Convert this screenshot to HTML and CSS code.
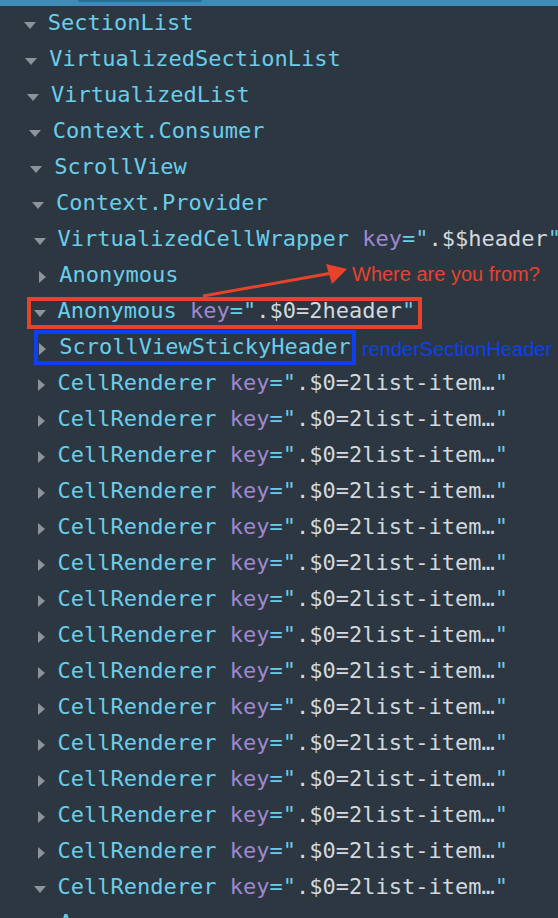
FILE: index.html
```html
<!DOCTYPE html>
<html>
<head>
<meta charset="utf-8">
<link rel="stylesheet" href="styles.css">
</head>
<body>
<div class="panel">
  <div class="topbar"><div class="thumb"></div></div>
  <div class="tree">
    <div class="row d0"><span class="tog"><i class="down"></i></span><span class="name">SectionList</span></div>
    <div class="row d1"><span class="tog"><i class="down"></i></span><span class="name">VirtualizedSectionList</span></div>
    <div class="row d2"><span class="tog"><i class="down"></i></span><span class="name">VirtualizedList</span></div>
    <div class="row d3"><span class="tog"><i class="down"></i></span><span class="name">Context.Consumer</span></div>
    <div class="row d4"><span class="tog"><i class="down"></i></span><span class="name">ScrollView</span></div>
    <div class="row d5"><span class="tog"><i class="down"></i></span><span class="name">Context.Provider</span></div>
    <div class="row d6"><span class="tog"><i class="down"></i></span><span class="name">VirtualizedCellWrapper</span><span class="attr">key</span><span class="eq">="</span><span class="val">.$$header</span><span class="eq">"</span></div>
    <div class="row d7"><span class="tog"><i class="right"></i></span><span class="name">Anonymous</span></div>
    <div class="row d6"><span class="tog"><i class="down"></i></span><span class="name">Anonymous</span><span class="attr">key</span><span class="eq">="</span><span class="val">.$0=2header</span><span class="eq">"</span></div>
    <div class="row d7"><span class="tog"><i class="right"></i></span><span class="name">ScrollViewStickyHeader</span></div>
    <div class="row d6"><span class="tog"><i class="right"></i></span><span class="name">CellRenderer</span><span class="attr">key</span><span class="eq">="</span><span class="val">.$0=2list-item…</span><span class="eq">"</span></div>
    <div class="row d6"><span class="tog"><i class="right"></i></span><span class="name">CellRenderer</span><span class="attr">key</span><span class="eq">="</span><span class="val">.$0=2list-item…</span><span class="eq">"</span></div>
    <div class="row d6"><span class="tog"><i class="right"></i></span><span class="name">CellRenderer</span><span class="attr">key</span><span class="eq">="</span><span class="val">.$0=2list-item…</span><span class="eq">"</span></div>
    <div class="row d6"><span class="tog"><i class="right"></i></span><span class="name">CellRenderer</span><span class="attr">key</span><span class="eq">="</span><span class="val">.$0=2list-item…</span><span class="eq">"</span></div>
    <div class="row d6"><span class="tog"><i class="right"></i></span><span class="name">CellRenderer</span><span class="attr">key</span><span class="eq">="</span><span class="val">.$0=2list-item…</span><span class="eq">"</span></div>
    <div class="row d6"><span class="tog"><i class="right"></i></span><span class="name">CellRenderer</span><span class="attr">key</span><span class="eq">="</span><span class="val">.$0=2list-item…</span><span class="eq">"</span></div>
    <div class="row d6"><span class="tog"><i class="right"></i></span><span class="name">CellRenderer</span><span class="attr">key</span><span class="eq">="</span><span class="val">.$0=2list-item…</span><span class="eq">"</span></div>
    <div class="row d6"><span class="tog"><i class="right"></i></span><span class="name">CellRenderer</span><span class="attr">key</span><span class="eq">="</span><span class="val">.$0=2list-item…</span><span class="eq">"</span></div>
    <div class="row d6"><span class="tog"><i class="right"></i></span><span class="name">CellRenderer</span><span class="attr">key</span><span class="eq">="</span><span class="val">.$0=2list-item…</span><span class="eq">"</span></div>
    <div class="row d6"><span class="tog"><i class="right"></i></span><span class="name">CellRenderer</span><span class="attr">key</span><span class="eq">="</span><span class="val">.$0=2list-item…</span><span class="eq">"</span></div>
    <div class="row d6"><span class="tog"><i class="right"></i></span><span class="name">CellRenderer</span><span class="attr">key</span><span class="eq">="</span><span class="val">.$0=2list-item…</span><span class="eq">"</span></div>
    <div class="row d6"><span class="tog"><i class="right"></i></span><span class="name">CellRenderer</span><span class="attr">key</span><span class="eq">="</span><span class="val">.$0=2list-item…</span><span class="eq">"</span></div>
    <div class="row d6"><span class="tog"><i class="right"></i></span><span class="name">CellRenderer</span><span class="attr">key</span><span class="eq">="</span><span class="val">.$0=2list-item…</span><span class="eq">"</span></div>
    <div class="row d6"><span class="tog"><i class="right"></i></span><span class="name">CellRenderer</span><span class="attr">key</span><span class="eq">="</span><span class="val">.$0=2list-item…</span><span class="eq">"</span></div>
    <div class="row d6"><span class="tog"><i class="down"></i></span><span class="name">CellRenderer</span><span class="attr">key</span><span class="eq">="</span><span class="val">.$0=2list-item…</span><span class="eq">"</span></div>
    <div class="row d7"><span class="tog"><i class="right"></i></span><span class="name">Anonymous</span></div>
  </div>

  <div class="mark mark-red"></div>
  <div class="mark mark-blue"></div>
  <svg class="arrow" width="558" height="918" viewBox="0 0 558 918">
    <line x1="203" y1="296" x2="332" y2="273" stroke="#e8432a" stroke-width="3"/>
    <polygon points="347,269 326,264 332,284" fill="#e8432a"/>
  </svg>
  <div class="note note-red">Where are you from?</div>
  <div class="note note-blue">renderSectionHeader</div>
</div>
</body>
</html>
```

FILE: styles.css
```css
html, body {
  margin: 0;
  padding: 0;
  background: #2c3742;
}
.panel {
  position: relative;
  width: 558px;
  height: 918px;
  overflow: hidden;
  background: #2c3742;
}
.topbar {
  height: 6px;
  background: #3e8bb8;
}
.thumb {
  margin-left: 78px;
  width: 124px;
  height: 2px;
  background: #2e6a93;
  border-radius: 0 0 2px 2px;
}
.tree {
  margin-top: -0.6px;
  font-family: "DejaVu Sans Mono", "Liberation Mono", monospace;
  font-size: 22px;
  white-space: nowrap;
}
.row {
  height: 36px;
  line-height: 36px;
  display: flex;
  align-items: center;
  padding-left: 23.7px;
  white-space: pre;
}
.row > span { flex: none; }
.row.d1 { padding-left: 25.35px; }
.row.d2 { padding-left: 27px; }
.row.d3 { padding-left: 28.65px; }
.row.d4 { padding-left: 30.3px; }
.row.d5 { padding-left: 31.95px; }
.row.d6 { padding-left: 33.6px; }
.row.d7 { padding-left: 35.25px; }
.tog {
  width: 24px;
  height: 36px;
  display: flex;
  align-items: center;
}
.down {
  display: block;
  width: 0;
  height: 0;
  margin-top: 4px;
  border-left: 6.5px solid transparent;
  border-right: 6.5px solid transparent;
  border-top: 7px solid #8c939b;
}
.right {
  display: block;
  width: 0;
  height: 0;
  margin-top: 4px;
  margin-left: 4px;
  border-top: 6px solid transparent;
  border-bottom: 6px solid transparent;
  border-left: 7px solid #8c939b;
}
.name { color: #6acde9; }
.attr { color: #a088cf; margin-left: 1ch; }
.eq { color: #6acde9; }
.val { color: #d3d9de; }

.mark {
  position: absolute;
  box-sizing: border-box;
}
.mark-red {
  left: 27px;
  top: 297px;
  width: 395px;
  height: 32px;
  border: 4px solid #e8432a;
}
.mark-blue {
  left: 34px;
  top: 330px;
  width: 322px;
  height: 35px;
  border: 4.5px solid #0d40f0;
}
.arrow {
  position: absolute;
  left: 0;
  top: 0;
}
.note {
  position: absolute;
  font-family: "Liberation Sans", Arial, sans-serif;
  font-size: 20px;
  line-height: 20px;
  white-space: nowrap;
}
.note-red {
  left: 352px;
  top: 264.4px;
  color: #e8432a;
}
.note-blue {
  left: 362px;
  top: 339px;
  color: #0d40f0;
}
```
